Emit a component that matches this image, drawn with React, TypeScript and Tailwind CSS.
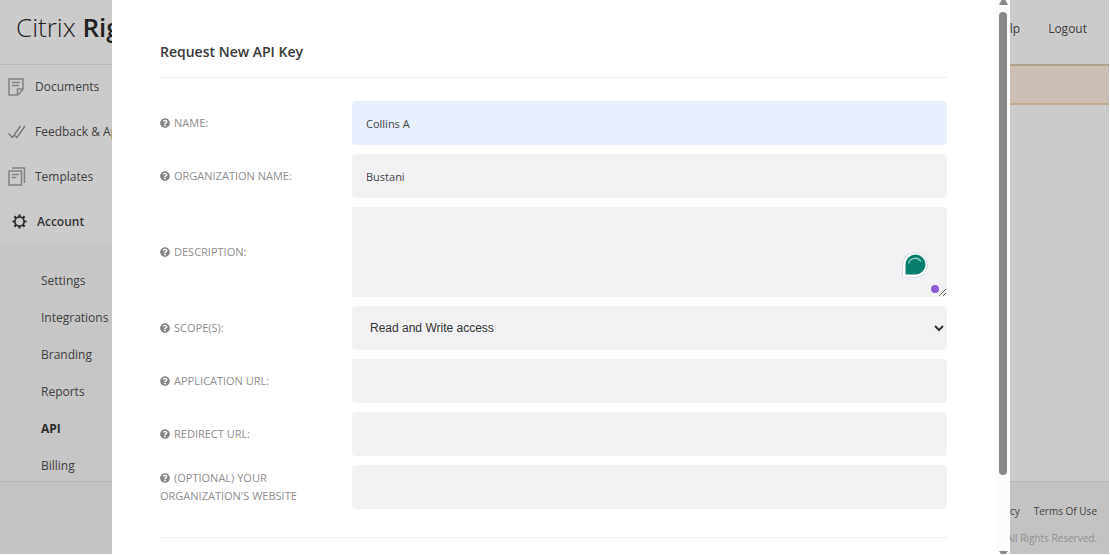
import { useState } from 'react';
import type { ReactNode } from 'react';
import { FaQuestionCircle } from 'react-icons/fa';
import { clsx } from 'clsx';

const navItems = [
  { label: 'Documents', icon: <DocumentIcon /> },
  { label: 'Feedback & Approvals', icon: <ChecksIcon /> },
  { label: 'Templates', icon: <TemplateIcon /> },
];

const accountItems = ['Settings', 'Integrations', 'Branding', 'Reports', 'API', 'Billing'];

const fieldClass =
  'block h-11 w-full rounded-[4px] bg-[#f2f2f4] px-3.5 text-[11px] text-[#444] outline-none';

function DocumentIcon() {
  return (
    <svg width="16" height="18" viewBox="0 0 16 18" fill="none" stroke="#858585" strokeWidth="1.6">
      <path d="M1 1h14v10.5L10 17H1z" />
      <path d="M15 11h-5.500v6M4 4.500h8M4 7.500h7" />
    </svg>
  );
}

function ChecksIcon() {
  return (
    <svg width="18" height="14" viewBox="0 0 18 14" fill="none" stroke="#777" strokeWidth="1.4">
      <path d="M0.500 8.500l4 4L12.500 1M7 10.500l2 2L17 1" />
    </svg>
  );
}

function TemplateIcon() {
  return (
    <svg width="18" height="19" viewBox="0 0 18 19" fill="none" stroke="#858585" strokeWidth="1.6">
      <path d="M1 4h12.500v14H1zM4 1h12.500v15" />
      <path d="M3.500 7.500h7.500M3.500 10.500h5" />
    </svg>
  );
}

function GearIcon() {
  return (
    <svg width="15" height="15" viewBox="0 0 15 15" fill="none" stroke="#2c2c2c">
      <circle cx="7.500" cy="7.500" r="4.600" strokeWidth="1.700" />
      <path
        d="M7.500 0.500v2.500M7.500 12v2.500M0.500 7.500h2.500M12 7.500h2.500M2.400 2.400l1.900 1.900M10.700 10.700l1.900 1.900M2.400 12.600l1.900-1.900M10.700 4.300l1.900-1.900"
        strokeWidth="2.200"
      />
    </svg>
  );
}

function AssistantIcon() {
  return (
    <svg width="28" height="28" viewBox="0 0 28 28" fill="none">
      <path d="M1.500 26.500V14A12.500 12.500 0 1 1 14 26.500z" fill="#fff" stroke="#d5dde0" />
      <path d="M4.500 23.500V13.500A10 10 0 1 1 14.500 23.500z" fill="#057e6c" />
      <path d="M7.500 12.500c1.500-6 9.500-7 12.500-2" stroke="#8fd0c2" strokeWidth="1.300" />
    </svg>
  );
}

function Field({ id, label, children }: { id: string; label: string; children: ReactNode }) {
  return (
    <div className="flex items-center">
      <label htmlFor={id} className="w-48 shrink-0 pr-8 text-[11px] leading-[18px] text-[#8e8e8e] uppercase">
        <FaQuestionCircle className="mr-1 inline-block size-2.5 align-[-1px] text-[#858585]" />
        {label}
      </label>
      <div className="relative min-w-0 flex-1">{children}</div>
    </div>
  );
}

function Scrollbar() {
  return (
    <div className="flex w-3.5 shrink-0 flex-col items-center bg-[#fcfcfc]" aria-hidden="true">
      <svg width="9" height="5" viewBox="0 0 9 5" className="shrink-0">
        <path d="M2.500 0h4L9 5H0z" fill="#8a8a8a" />
      </svg>
      <div className="mt-[7px] w-2 basis-[463px] rounded-full bg-[#8a8a8a]" />
      <svg width="9" height="3" viewBox="0 0 9 3" className="mt-auto shrink-0">
        <path d="M0 0h9L7 3H2z" fill="#8a8a8a" />
      </svg>
    </div>
  );
}

function RequestKeyDialog() {
  const [form, setForm] = useState({
    name: 'Collins A',
    organization: 'Bustani',
    description: '',
    scope: 'rw',
    appUrl: '',
    redirectUrl: '',
    website: '',
  });

  function update(key: keyof typeof form, value: string) {
    setForm((f) => ({ ...f, [key]: value }));
  }

  return (
    <div
      role="dialog"
      aria-labelledby="dialog-title"
      className="absolute inset-y-0 right-[99px] left-28 flex overflow-hidden bg-white"
    >
      <form className="min-w-0 flex-1 pt-10 pr-[49px] pl-12">
        <h1
          id="dialog-title"
          className="mb-[23px] border-b border-[#ececec] pb-3.5 text-sm leading-[23px] font-semibold text-[#3a3a3a]"
        >
          Request New API Key
        </h1>

        <div className="flex flex-col gap-[9px] border-b border-[#f0f0f0] pb-7">
          <Field id="name" label="Name:">
            <input
              id="name"
              value={form.name}
              onChange={(e) => update('name', e.target.value)}
              className={clsx(fieldClass, 'bg-[#e8effd]!')}
            />
          </Field>
          <Field id="organization" label="Organization name:">
            <input
              id="organization"
              value={form.organization}
              onChange={(e) => update('organization', e.target.value)}
              className={fieldClass}
            />
          </Field>
          <Field id="description" label="Description:">
            <textarea
              id="description"
              value={form.description}
              onChange={(e) => update('description', e.target.value)}
              className="block h-[90px] w-full resize-y rounded-[4px] bg-[#f2f2f4] px-3.5 py-3 text-[11px] text-[#444] outline-none"
            />
            <span className="pointer-events-none absolute right-[18px] bottom-[18px]">
              <AssistantIcon />
            </span>
            <span className="pointer-events-none absolute right-2 bottom-1 size-2 rounded-full bg-[#8b5bd6]" />
          </Field>
          <Field id="scope" label="Scope(s):">
            <select
              id="scope"
              value={form.scope}
              onChange={(e) => update('scope', e.target.value)}
              className="block h-11 w-full rounded-[4px] bg-[#f2f2f4] pl-3.5 font-['Liberation_Sans',sans-serif] text-xs text-[#333] outline-none"
            >
              <option value="rw">Read and Write access</option>
              <option value="r">Read access</option>
            </select>
          </Field>
          <Field id="app-url" label="Application URL:">
            <input
              id="app-url"
              value={form.appUrl}
              onChange={(e) => update('appUrl', e.target.value)}
              className={fieldClass}
            />
          </Field>
          <Field id="redirect-url" label="Redirect URL:">
            <input
              id="redirect-url"
              value={form.redirectUrl}
              onChange={(e) => update('redirectUrl', e.target.value)}
              className={fieldClass}
            />
          </Field>
          <Field id="website" label="(Optional) your organization's website">
            <input
              id="website"
              value={form.website}
              onChange={(e) => update('website', e.target.value)}
              className={fieldClass}
            />
          </Field>
        </div>
      </form>
      <Scrollbar />
    </div>
  );
}

export default function App() {
  return (
    <div className="relative h-screen overflow-hidden border-r border-b border-white bg-[#cbcbcb] font-['Open_Sans','Noto_Sans',sans-serif] text-xs text-[#404040]">
      <div className="flex h-full flex-col">
        {/* Header */}
        <header className="flex h-16 shrink-0 items-center justify-between pr-[22px] pb-2.5 pl-4">
          <a href="#" className="text-[26px] leading-8 font-light whitespace-nowrap text-[#222]">
            Citrix <span className="font-semibold">RightSignature</span>
          </a>
          <nav className="flex gap-7 pt-1">
            <a href="#">Help</a>
            <a href="#">Logout</a>
          </nav>
        </header>

        <div className="flex min-h-0 flex-1 overflow-hidden">
          {/* Sidebar */}
          <nav className="flex w-60 shrink-0 flex-col border-t border-[#bababa]">
            {navItems.map(({ label, icon }) => (
              <a key={label} href="#" className="flex h-[45px] shrink-0 items-center gap-2.5 pb-0.5 pl-2">
                <span className="w-[17px] shrink-0">{icon}</span>
                {label}
              </a>
            ))}
            <a
              href="#"
              className="flex h-[45px] shrink-0 items-center gap-2.5 pb-0.5 pl-3 font-semibold text-[#333]"
            >
              <GearIcon />
              Account
            </a>
            <div className="flex-1 bg-[#c6c6c6] pt-[17px]">
              {accountItems.map((item) => (
                <a
                  key={item}
                  href="#"
                  className={clsx('flex h-[37px] items-center pl-[41px]', item === 'API' && 'font-bold text-[#2c2c2c]')}
                >
                  {item}
                </a>
              ))}
            </div>
          </nav>
          <main className="flex-1">
            <div className="h-[41px] border-y-2 border-t-[#b3a38d] border-b-[#c3ab8d] bg-[#ccc0b6]" />
          </main>
        </div>

        {/* Footer */}
        <footer className="flex h-[73px] shrink-0 flex-col items-end justify-center gap-2.5 border-t border-[#b5b5b5] bg-[#c3c3c3] pt-3.5 pr-3 text-[10px] leading-[17px]">
          <div className="flex gap-3.5">
            <a href="#">Privacy</a>
            <a href="#">Terms Of Use</a>
          </div>
          <p className="text-[#8f8f8f]">All Rights Reserved.</p>
        </footer>
      </div>

      <RequestKeyDialog />
    </div>
  );
}
